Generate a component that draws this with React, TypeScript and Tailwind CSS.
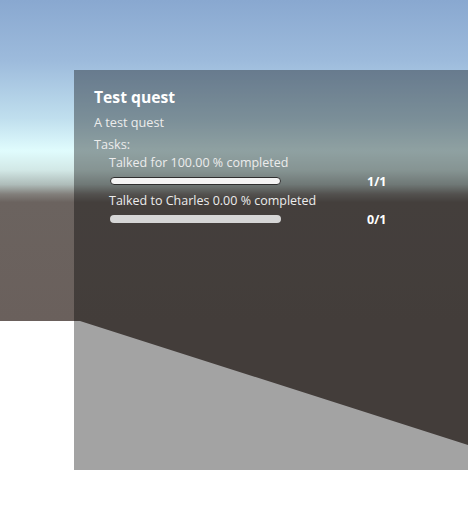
import React from "react";

const tasks = [
  { label: "Talked for 100.00 % completed", count: "1/1", done: true },
  { label: "Talked to Charles 0.00 % completed", count: "0/1", done: false },
];

export default function App() {
  return (
    <div className="relative w-[468px] h-[513px] overflow-hidden bg-white" style={{ fontFamily: '"Open Sans", "Noto Sans", sans-serif' }}>
      <svg width="468" height="513" viewBox="0 0 468 513" className="block">
        <defs>
          <linearGradient id="sky" x1="0" y1="0" x2="0" y2="321" gradientUnits="userSpaceOnUse">
            <stop offset="0" stopColor="#89a8d0" />
            <stop offset="0.19" stopColor="#9dbbdc" />
            <stop offset="0.37" stopColor="#c0dfee" />
            <stop offset="0.47" stopColor="#e0fcfd" />
            <stop offset="0.53" stopColor="#d2e8e6" />
            <stop offset="0.575" stopColor="#aebcb9" />
            <stop offset="0.605" stopColor="#827f7b" />
            <stop offset="0.63" stopColor="#6b635f" />
            <stop offset="1" stopColor="#6a605c" />
          </linearGradient>
        </defs>
        <rect x="0" y="0" width="468" height="321" fill="url(#sky)" />
        <polygon points="74,320 80,321 468,445 468,320" fill="#6a605c" />
      </svg>

      <div className="absolute left-[74px] top-[70px] w-[394px] h-[400px] bg-black/[0.36] pl-[20px] pt-[16px]">
        <div className="text-[15.7px] leading-[22px] font-bold text-white">Test quest</div>
        <div className="mt-[5px] text-[12.7px] leading-[18px] text-[#ececec]">A test quest</div>
        <div className="mt-[4px] text-[12.7px] leading-[18px] text-[#ececec]">Tasks:</div>
        <div className="ml-[15px] mt-[1px] flex flex-col gap-[1px]">
          {tasks.map((t) => (
            <div key={t.label} className="flex flex-col">
              <div className="text-[12.5px] leading-[18px] text-[#ececec] whitespace-nowrap">{t.label}</div>
              <div className="mt-[1px] h-[18px] flex items-start">
                <div
                  className={
                    t.done
                      ? "mt-[4px] ml-[1px] w-[171px] h-[8px] rounded-full bg-[#f4f4f4] border border-[#2e2e2e]"
                      : "mt-[4px] ml-[1px] w-[171px] h-[8px] rounded-full bg-[#d6d6d6]"
                  }
                />
                <div className="ml-[86px] text-[12.5px] leading-[18px] font-bold text-white">{t.count}</div>
              </div>
            </div>
          ))}
        </div>
      </div>
    </div>
  );
}
